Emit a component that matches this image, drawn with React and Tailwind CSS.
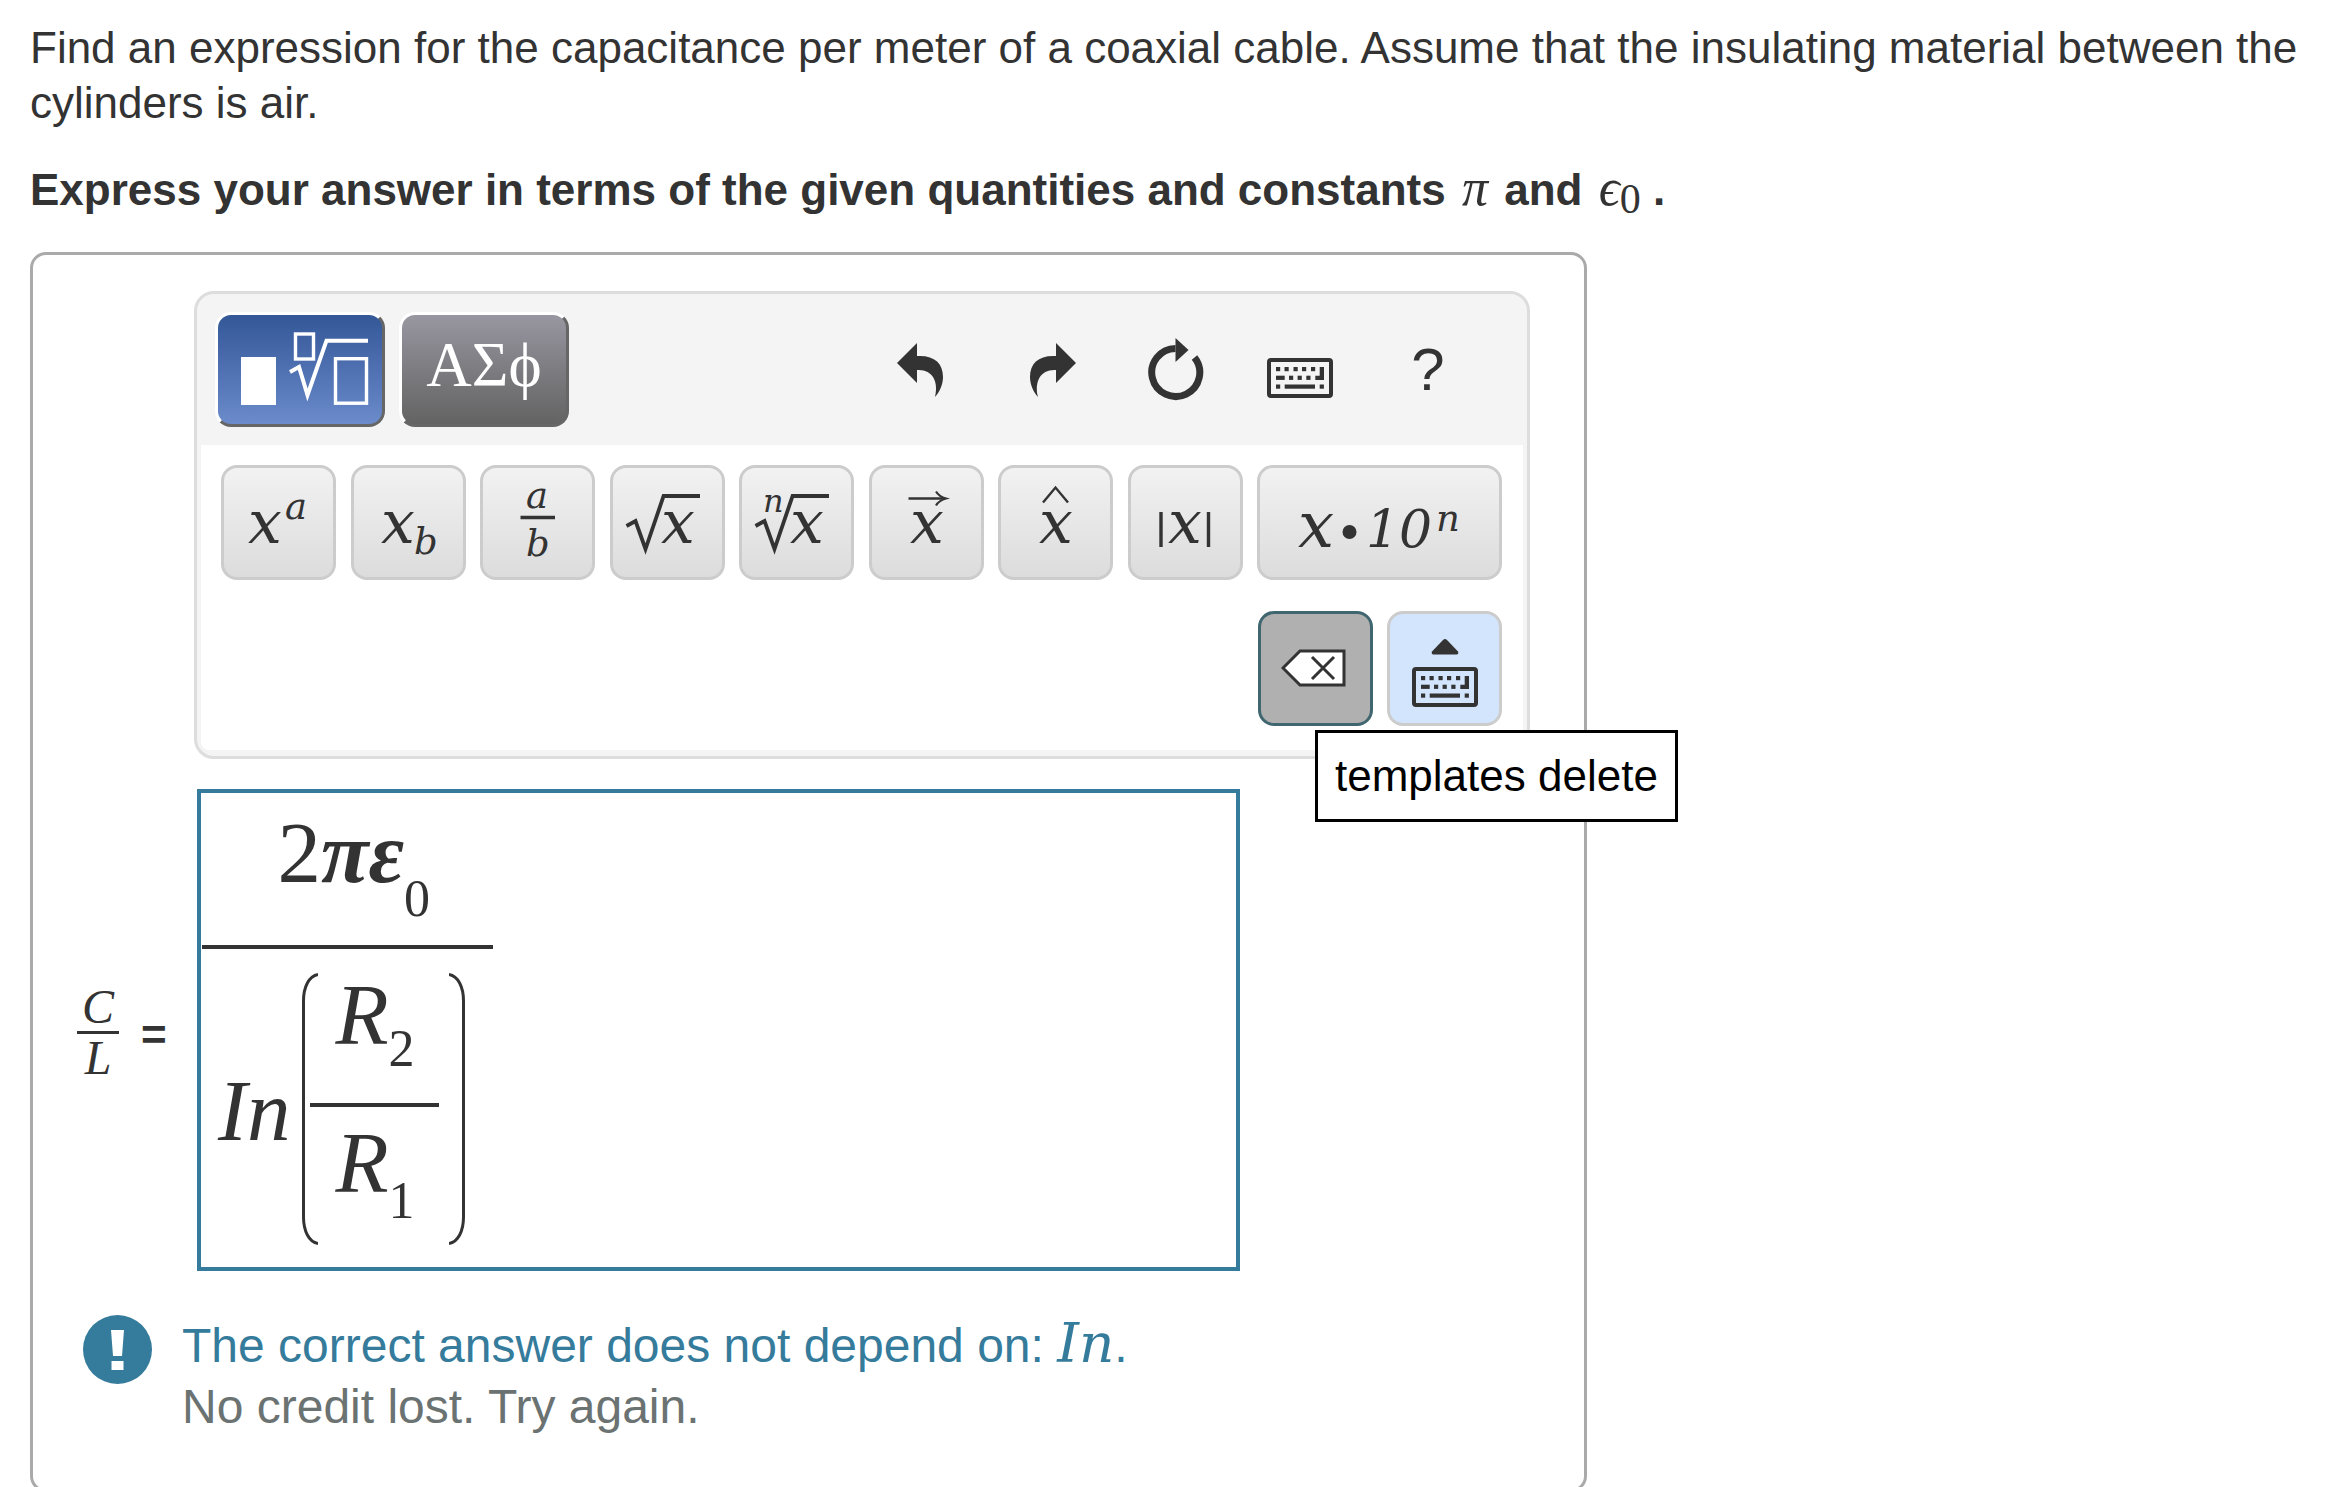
import clsx from 'clsx';

const serif = "font-['Liberation_Serif',serif]";
const wideSerif = "font-['DejaVu_Serif',serif]";

/* ── Toolbar icons ── */

function UndoIcon() {
  return (
    <svg width="56" height="54" viewBox="-9 0 56 54" fill="currentColor" aria-hidden="true">
      <path d="M0 20 L20 0 V13 C37 12 46 20 46 34 C46 42 42 50 38 54 C42 38 35 26 20 27 V40 Z" />
    </svg>
  );
}

function RedoIcon() {
  return (
    <svg width="64" height="54" viewBox="-18 0 64 54" fill="currentColor" aria-hidden="true">
      <path d="M46 20 L26 0 V13 C9 12 0 20 0 34 C0 42 4 50 8 54 C4 38 11 26 26 27 V40 Z" />
    </svg>
  );
}

function ResetIcon() {
  return (
    <svg width="63" height="64" viewBox="-7 0 63 64" aria-hidden="true">
      <path d="M46.5 19.5 A24 24 0 1 1 27.5 10.5" fill="none" stroke="currentColor" strokeWidth="7" />
      <path d="M27.5 0 L40.5 12 L27.5 24 Z" fill="currentColor" />
    </svg>
  );
}

function KeyboardIcon() {
  return (
    <svg width="66" height="40" viewBox="0 0 66 40" fill="currentColor" aria-hidden="true">
      <rect x="2" y="2" width="62" height="36" rx="2" fill="none" stroke="currentColor" strokeWidth="4" />
      {[9, 17.5, 26.5, 35, 44].map((x) => (
        <rect key={x} x={x} y="9" width="4.2" height="4.2" />
      ))}
      <path d="M52.7 9 H57 V22 H48.3 V17.7 H52.7 Z" />
      <rect x="9" y="17.7" width="8.7" height="4.2" />
      {[22, 30.6, 39.3].map((x) => (
        <rect key={x} x={x} y="17.7" width="4.2" height="4.2" />
      ))}
      <rect x="9" y="26.5" width="4.2" height="4.2" />
      <rect x="17.7" y="26.5" width="30.3" height="4.2" />
      <rect x="52.7" y="26.5" width="4.2" height="4.2" />
    </svg>
  );
}

function DeleteIcon() {
  return (
    <svg width="70" height="40" viewBox="0 0 70 40" fill="none" stroke="currentColor" strokeWidth="3" aria-hidden="true">
      <path d="M2 19 L19 2 H63 V36 H19 Z" fill="#fff" />
      <path d="M31 8 L53 30 M53 8 L31 30" />
    </svg>
  );
}

function TemplatesIcon() {
  return (
    <svg width="164" height="109" viewBox="3 3 164 109" fill="none" stroke="#fff" aria-hidden="true">
      <rect x="26" y="45" width="35" height="48" fill="#fff" stroke="none" />
      <rect x="80.5" y="22" width="18" height="25" strokeWidth="3.4" />
      <path d="M75 60 L84 55 L92.5 83 L111.5 28.7 H153" strokeWidth="4" />
      <rect x="120.5" y="46.7" width="31" height="44.5" strokeWidth="3.4" />
    </svg>
  );
}

/* ── Template keys ── */

function Glyph({ x, y, size = 60, children }) {
  return (
    <text x={x} y={y} fontSize={size} fontStyle="italic" fill="currentColor" stroke="none">
      {children}
    </text>
  );
}

function Radical() {
  return <path d="M16.5 61 L25.5 56 L35.5 84 L53.6 31 H90" strokeWidth="3.8" />;
}

const templates = [
  {
    label: 'superscript',
    icon: (
      <>
        <Glyph x={27} y={78}>x</Glyph>
        <Glyph x={64} y={54} size={37}>a</Glyph>
      </>
    ),
  },
  {
    label: 'subscript',
    icon: (
      <>
        <Glyph x={30} y={78}>x</Glyph>
        <Glyph x={63} y={89} size={37}>b</Glyph>
      </>
    ),
  },
  {
    label: 'fraction',
    icon: (
      <>
        <Glyph x={46} y={43} size={37}>a</Glyph>
        <path d="M40.5 52.5 H75" strokeWidth="3.4" />
        <Glyph x={46} y={91} size={37}>b</Glyph>
      </>
    ),
  },
  {
    label: 'square root',
    icon: (
      <>
        <Radical />
        <Glyph x={51} y={78}>x</Glyph>
      </>
    ),
  },
  {
    label: 'nth root',
    icon: (
      <>
        <Glyph x={24} y={47} size={32}>n</Glyph>
        <Radical />
        <Glyph x={51} y={78}>x</Glyph>
      </>
    ),
  },
  {
    label: 'vector',
    icon: (
      <>
        <path d="M39.5 33.5 H75" strokeWidth="2.4" />
        <path d="M67 26.5 Q70 31.5 77 33.5 Q70 35.5 67 40.5" strokeWidth="2.2" />
        <Glyph x={41} y={78}>x</Glyph>
      </>
    ),
  },
  {
    label: 'unit vector',
    icon: (
      <>
        <path d="M45 37.5 L57.5 22.5 L70 37.5" strokeWidth="2.4" />
        <Glyph x={41} y={78}>x</Glyph>
      </>
    ),
  },
  {
    label: 'absolute value',
    icon: (
      <>
        <path d="M33 47 V82 M80.5 47 V82" strokeWidth="3.4" />
        <Glyph x={40} y={78}>x</Glyph>
      </>
    ),
  },
  {
    label: 'scientific notation',
    wide: true,
    icon: (
      <>
        <Glyph x={41} y={82} size={64}>x</Glyph>
        <circle cx="92.5" cy="67" r="7" fill="currentColor" stroke="none" />
        <Glyph x={109} y={82} size={52}>10</Glyph>
        <Glyph x={179} y={66} size={37}>n</Glyph>
      </>
    ),
  },
];

function TemplateKey({ label, wide, icon }) {
  return (
    <button
      type="button"
      aria-label={label}
      className={clsx(
        'h-[115px] rounded-2xl border-3 border-[#cccccc] bg-linear-to-b from-[#f2f2f2] to-[#dcdcdc]',
        wide ? 'w-[245px]' : 'w-[115px]',
      )}
    >
      <svg
        className={clsx('h-full w-full', wideSerif)}
        viewBox={wide ? '3 3 239 109' : '3 3 109 109'}
        fill="none"
        stroke="currentColor"
      >
        {icon}
      </svg>
    </button>
  );
}

function ToolButton({ label, children }) {
  return (
    <button type="button" aria-label={label} className="flex h-20 w-32 items-center justify-center">
      {children}
    </button>
  );
}

/* ── Answer expression ── */

function Subscript({ base, sub, drop }) {
  return (
    <span className="flex items-end">
      <span className={clsx('text-[87px] leading-20', drop)}>{base}</span>
      <span className="text-[52px] leading-15">{sub}</span>
    </span>
  );
}

function Paren({ flip }) {
  return (
    <svg
      width="16"
      height="272"
      viewBox="0 0 16 272"
      fill="none"
      stroke="currentColor"
      strokeWidth="3"
      className={flip ? 'ml-2.5' : '-mr-2'}
      aria-hidden="true"
    >
      <path
        d={
          flip
            ? 'M0 1.5 C9 3 14.5 14 14.5 28 V244 C14.5 258 9 269 0 270.5'
            : 'M16 1.5 C7 3 1.5 14 1.5 28 V244 C1.5 258 7 269 16 270.5'
        }
      />
    </svg>
  );
}

function Answer() {
  return (
    <div
      role="math"
      aria-label="2 pi epsilon 0 over In of R2 over R1"
      className={clsx('flex flex-1 items-start border-4 border-[#357b9b]', serif)}
    >
      <div className="ml-px flex flex-col">
        <div className="flex justify-center pt-5 pb-4 pl-3">
          <Subscript
            base={
              <>
                2<b className="italic">πε</b>
              </>
            }
            sub="0"
            drop="mb-9"
          />
        </div>
        <div className="h-1 bg-[#333333]" />
        <div className="flex items-center pt-6 pr-7 pb-[22px] pl-4">
          <i className="pt-1 pr-3 text-[87px] leading-20">In</i>
          <Paren />
          <div className="flex w-[129px] flex-col items-center">
            <div className="pb-6">
              <Subscript base={<i>R</i>} sub="2" drop="mb-6" />
            </div>
            <div className="h-1 w-full bg-[#333333]" />
            <div className="pt-4 pb-3">
              <Subscript base={<i>R</i>} sub="1" drop="mb-7" />
            </div>
          </div>
          <Paren flip />
        </div>
      </div>
    </div>
  );
}

export default function App() {
  return (
    <main className="h-screen overflow-hidden bg-white px-[30px] pt-5 font-['Liberation_Sans',sans-serif] text-[44px] leading-[55px] text-[#333333]">
      <p>
        Find an expression for the capacitance per meter of a coaxial cable. Assume that the insulating material
        between the cylinders is air.
      </p>
      <p className="mt-8 font-bold">
        Express your answer in terms of the given quantities and constants{' '}
        <i className={clsx('mx-1 text-[52px] leading-none font-normal', serif)}>π</i> and{' '}
        <span className={clsx('ml-1 text-[52px] leading-none font-normal', serif)}>
          <i>ϵ</i>
          <sub className="bottom-[-8px] text-[42px]">0</sub>
        </span>{' '}
        .
      </p>

      <section className="mt-[35px] max-w-[1557px] rounded-2xl border-3 border-[#aaaaaa] pt-9 pb-[52px]">
        {/* ── Equation toolbar ── */}
        <div className="mr-[54px] ml-[161px] rounded-[20px] border-3 border-[#dddddd] bg-[#f4f4f4] px-1 pb-1.5">
          <div className="flex items-start justify-between pt-[18px] pr-[31px] pb-[18px] pl-[14px]">
            <div className="flex gap-[14px]">
              <button
                type="button"
                aria-label="templates"
                className="h-[115px] w-[170px] rounded-2xl border-3 border-t-white border-r-[#666666] border-b-[#666666] border-l-white bg-linear-to-b from-[#345797] to-[#6b8bcb]"
              >
                <TemplatesIcon />
              </button>
              <button
                type="button"
                className={clsx(
                  'h-[115px] w-[170px] rounded-2xl border-3 border-t-white border-r-[#666666] border-b-[#666666] border-l-white bg-linear-to-b from-[#9896a0] to-[#636363] pb-2 text-[63px] leading-none text-white',
                  serif,
                )}
              >
                ΑΣϕ
              </button>
            </div>
            <div className="flex pt-[18px]">
              <ToolButton label="undo">
                <UndoIcon />
              </ToolButton>
              <ToolButton label="redo">
                <RedoIcon />
              </ToolButton>
              <ToolButton label="reset">
                <ResetIcon />
              </ToolButton>
              <ToolButton label="keyboard shortcuts">
                <span className="pt-4">
                  <KeyboardIcon />
                </span>
              </ToolButton>
              <button type="button" aria-label="help" className="h-20 w-32 text-[60px] leading-none">
                ?
              </button>
            </div>
          </div>

          <div className="flex flex-col gap-[31px] rounded-b-lg bg-white pt-5 pr-[21px] pb-6 pl-5">
            <div className="flex justify-between">
              {templates.map((t) => (
                <TemplateKey key={t.label} {...t} />
              ))}
            </div>
            <div className="flex justify-end gap-[14px]">
              <div className="relative">
                <button
                  type="button"
                  aria-label="templates delete"
                  className="flex h-[115px] w-[115px] items-center justify-center rounded-2xl border-3 border-[#406670] bg-[#b0b0b0]"
                >
                  <DeleteIcon />
                </button>
                <div
                  role="tooltip"
                  className="absolute top-[119px] left-[57px] border-3 border-black bg-white px-[17px] py-4 leading-[54px] whitespace-nowrap text-black"
                >
                  templates delete
                </div>
              </div>
              <button
                type="button"
                aria-label="hide keyboard"
                className="flex h-[115px] w-[115px] flex-col items-center justify-center gap-3 rounded-2xl border-3 border-[#cccccc] bg-[#d2e5fd] pt-2"
              >
                <svg width="28" height="16" viewBox="0 0 28 16" fill="currentColor" aria-hidden="true">
                  <path d="M14 0 Q15 0 16 1 L27 12.5 Q28 15.5 25.5 15.5 H2.5 Q0 15.5 1 12.5 L12 1 Q13 0 14 0 Z" />
                </svg>
                <KeyboardIcon />
              </button>
            </div>
          </div>
        </div>

        {/* ── Answer row ── */}
        <div className="mt-[30px] mr-[344px] ml-11 flex items-center">
          <div className={clsx('flex w-[42px] flex-col items-center pt-1 text-[48px] leading-[46px] italic', serif)}>
            <span>C</span>
            <div className="my-px h-[3px] w-full bg-[#333333]" />
            <span>L</span>
          </div>
          <span className="w-[78px] pt-2 pl-[22px] font-bold">=</span>
          <Answer />
        </div>

        {/* ── Feedback ── */}
        <div className="mt-11 ml-[50px] flex gap-[30px]">
          <svg width="69" height="69" viewBox="0 0 69 69" aria-hidden="true">
            <circle cx="34.5" cy="34.5" r="34.5" fill="#357b9b" />
            <path d="M28 15 H41 L39 41 H30 Z M28.5 46 H40.5 V55 H28.5 Z" fill="#fff" />
          </svg>
          <div className="text-[48px] leading-[61px]">
            <p className="text-[#357b9b]">
              The correct answer does not depend on: <i className={clsx('text-[55px] leading-0', wideSerif)}>In</i>.
            </p>
            <p className="text-[#6b7272]">No credit lost. Try again.</p>
          </div>
        </div>
      </section>
    </main>
  );
}
